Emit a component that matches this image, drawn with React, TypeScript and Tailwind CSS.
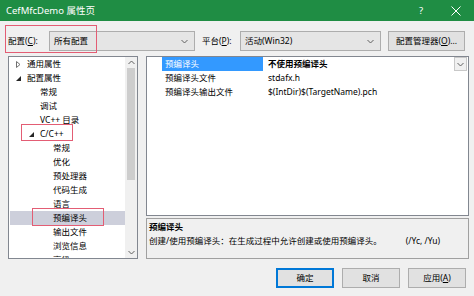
import type { ReactNode } from "react";

const FONT = "font-['Noto_Sans','Noto_Sans_CJK_SC',sans-serif]";

const TREE = [
  { label: "通用属性", level: 0, icon: "closed" },
  { label: "配置属性", level: 0, icon: "open" },
  { label: "常规", level: 1 },
  { label: "调试", level: 1 },
  { label: "VC++ 目录", level: 1 },
  { label: "C/C++", level: 1, icon: "open" },
  { label: "常规", level: 2 },
  { label: "优化", level: 2 },
  { label: "预处理器", level: 2 },
  { label: "代码生成", level: 2 },
  { label: "语言", level: 2 },
  { label: "预编译头", level: 2, selected: true },
  { label: "输出文件", level: 2 },
  { label: "浏览信息", level: 2 },
  { label: "高级", level: 2 },
];

const PROPS = [
  { name: "预编译头", value: "不使用预编译头", selected: true },
  { name: "预编译头文件", value: "stdafx.h" },
  { name: "预编译头输出文件", value: "$(IntDir)$(TargetName).pch" },
];

function Chevron({ up = false }: { up?: boolean }) {
  return (
    <svg width="7" height="5" viewBox="0 0 7 5" className={up ? "rotate-180" : ""}>
      <path d="M0.5 1 L3.5 4 L6.5 1" fill="none" stroke="#606060" strokeWidth="1" />
    </svg>
  );
}

function Combo({ text, className }: { text: string; className: string }) {
  return (
    <div
      className={`h-[20px] flex items-center justify-between pl-[4px] pr-[6px] bg-[#e5e5e5] border border-[#adadad] ${className}`}
    >
      <span>{text}</span>
      <Chevron />
    </div>
  );
}

function Btn({ children, def, className }: { children: ReactNode; def?: boolean; className: string }) {
  return (
    <div
      className={`h-[20px] flex items-center justify-center bg-[#e1e1e1] ${
        def ? "border-2 border-[#0078d7]" : "border border-[#adadad]"
      } ${className}`}
    >
      {children}
    </div>
  );
}

function TreeIcon({ kind }: { kind?: string }) {
  if (kind === "closed")
    return (
      <svg width="5" height="7" viewBox="0 0 5 7">
        <path d="M0.5 0.5 L4 3.5 L0.5 6.5 Z" fill="none" stroke="#707070" strokeWidth="1" />
      </svg>
    );
  if (kind === "open")
    return (
      <svg width="5" height="5" viewBox="0 0 5 5">
        <path d="M5 0 L5 5 L0 5 Z" fill="#262626" />
      </svg>
    );
  return null;
}

export default function App() {
  return (
    <div className={`relative w-[474px] h-[296px] bg-[#f0f0f0] flex flex-col overflow-hidden text-[8.5px] leading-[14px] text-black ${FONT}`}>
      {/* 标题栏 */}
      <div className="h-[21px] bg-[#1f8d44] flex items-center pl-[6px] text-white text-[9.5px]">
        <span className="flex-1">CefMfcDemo 属性页</span>
        <span className="w-[12px] text-center mr-[24px]">?</span>
        <svg width="10" height="10" viewBox="0 0 10 10" className="mr-[13px]">
          <path d="M0.5 0.5 L9.5 9.5 M9.5 0.5 L0.5 9.5" stroke="#fff" strokeWidth="1" />
        </svg>
      </div>

      {/* 配置 / 平台 */}
      <div className="mt-[10px] h-[20px] flex items-center">
        <span className="ml-[8px] w-[41px]">
          配置(<span className="underline">C</span>):
        </span>
        <Combo text="所有配置" className="w-[146px]" />
        <span className="ml-[7px] w-[38px]">
          平台(<span className="underline">P</span>):
        </span>
        <Combo text="活动(Win32)" className="w-[141px]" />
        <Btn className="ml-[7px] w-[77px]">
          配置管理器(<span className="underline">O</span>)...
        </Btn>
      </div>

      {/* 主体 */}
      <div className="mt-[5px] flex pl-[8px]">
        {/* 树 */}
        <div className="w-[130px] h-[203px] bg-white border border-[#828790] flex overflow-hidden">
          <div className="w-[116px] overflow-hidden">
            {TREE.map((t, i) => (
              <div
                key={i}
                className={`h-[14px] flex items-center ml-[1px] ${t.selected ? "bg-[#cdcfdb]" : ""}`}
              >
                <div
                  className={`shrink-0 flex items-center justify-end pr-[6px] ${
                    t.level === 0 ? "w-[17px]" : t.level === 1 ? "w-[30px]" : "w-[43px]"
                  }`}
                >
                  <TreeIcon kind={t.icon} />
                </div>
                <span className="whitespace-nowrap">{t.label}</span>
              </div>
            ))}
          </div>
          <div className="w-[12px] flex flex-col items-center bg-[#f0f0f0]">
            <div className="h-[11px] flex items-center">
              <Chevron up />
            </div>
            <div className="w-[8px] h-[112px] bg-[#cdcdcd]" />
            <div className="flex-1" />
            <div className="h-[12px] flex items-center">
              <Chevron />
            </div>
          </div>
        </div>

        {/* 右侧 */}
        <div className="ml-[8px] w-[323px] flex flex-col">
          <div className="h-[160px] bg-white border border-[#828790]">
            {PROPS.map((p, i) => (
              <div key={i} className="h-[14px] flex items-center">
                <div
                  className={`ml-[15px] w-[101px] h-full flex items-center pl-[3px] ${
                    p.selected ? "bg-[#3399ff] text-white" : ""
                  }`}
                >
                  {p.name}
                </div>
                <div className={`flex-1 h-full flex items-center pl-[5px] ${p.selected ? "font-bold" : ""}`}>
                  {p.value}
                </div>
                {p.selected && (
                  <div className="w-[13px] h-[14px] mr-[1px] flex items-center justify-center bg-[#f0f0f0] border border-[#c8c8c8]">
                    <Chevron />
                  </div>
                )}
              </div>
            ))}
          </div>
          <div className="mt-[2px] h-[41px] border border-[#a0a0a0] pl-[2px] pt-[1px] pr-[28px]">
            <div className="font-bold">预编译头</div>
            <div className="flex justify-between">
              <span>创建/使用预编译头：在生成过程中允许创建或使用预编译头。</span>
              <span>(/Yc, /Yu)</span>
            </div>
          </div>
        </div>
      </div>

      {/* 按钮 */}
      <div className="mt-[9px] flex justify-end gap-[8px] pr-[8px]">
        <Btn def className="w-[58px]">确定</Btn>
        <Btn className="w-[58px]">取消</Btn>
        <Btn className="w-[58px]">
          应用(<span className="underline">A</span>)
        </Btn>
      </div>

      {/* 标注红框 */}
      <div className="absolute left-[5px] top-[25px] w-[92px] h-[28px] border border-[#e35d74]" />
      <div className="absolute left-[21px] top-[124px] w-[52px] h-[17px] border border-[#e35d74]" />
      <div className="absolute left-[32px] top-[208px] w-[72px] h-[18px] border border-[#e35d74]" />
    </div>
  );
}
